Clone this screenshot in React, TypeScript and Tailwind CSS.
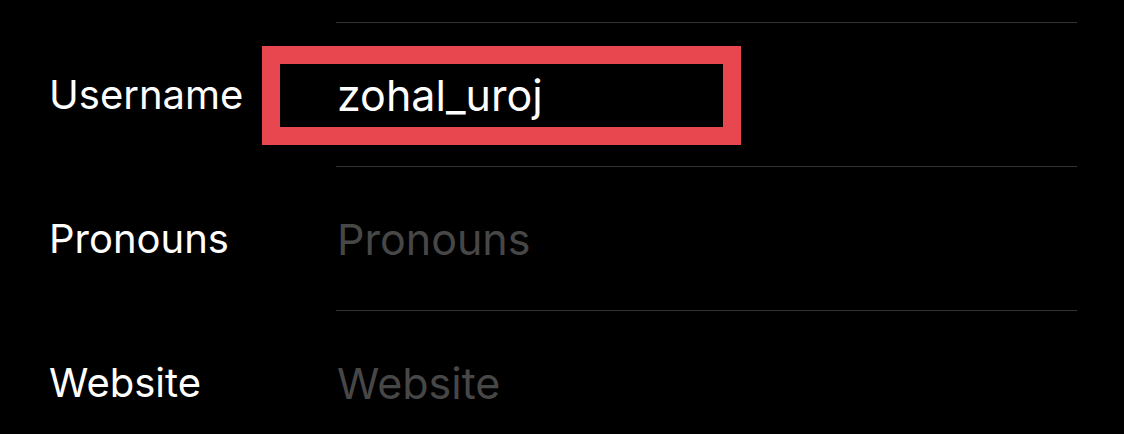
import React from "react";

const rows = [
  { label: "Username", value: "zohal_uroj", placeholder: false, marked: true },
  { label: "Pronouns", value: "Pronouns", placeholder: true, marked: false },
  { label: "Website", value: "Website", placeholder: true, marked: false },
];

export default function App() {
  return (
    <div className="w-[1124px] h-[434px] overflow-hidden bg-black pt-[22px] font-['Inter','Noto_Sans',sans-serif]">
      {rows.map((r) => (
        <div key={r.label} className="relative flex h-[144px]">
          <div className="w-[336px] shrink-0 pl-[49px] flex items-center text-white text-[40px] pt-[2px]">
            {r.label}
          </div>
          <div className="flex-1 mr-[47px] border-t border-[#333333] flex items-center pl-[1px] pt-[2px]">
            <span className={`text-[43px] ${r.placeholder ? "text-[#474747]" : "text-white"}`}>
              {r.value}
            </span>
          </div>
          {r.marked && (
            <div className="absolute left-[262px] top-[24px] w-[479px] h-[99px] border-[18px] border-[#e8474f]" />
          )}
        </div>
      ))}
    </div>
  );
}
